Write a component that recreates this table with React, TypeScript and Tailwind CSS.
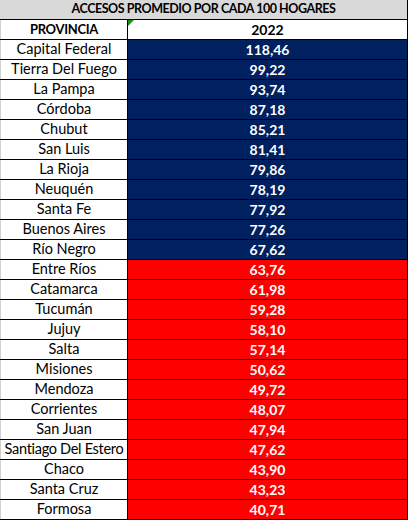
import React from "react";

const rows: [string, string, boolean][] = [
  ["Capital Federal", "118,46", true],
  ["Tierra Del Fuego", "99,22", true],
  ["La Pampa", "93,74", true],
  ["Córdoba", "87,18", true],
  ["Chubut", "85,21", true],
  ["San Luis", "81,41", true],
  ["La Rioja", "79,86", true],
  ["Neuquén", "78,19", true],
  ["Santa Fe", "77,92", true],
  ["Buenos Aires", "77,26", true],
  ["Río Negro", "67,62", true],
  ["Entre Ríos", "63,76", false],
  ["Catamarca", "61,98", false],
  ["Tucumán", "59,28", false],
  ["Jujuy", "58,10", false],
  ["Salta", "57,14", false],
  ["Misiones", "50,62", false],
  ["Mendoza", "49,72", false],
  ["Corrientes", "48,07", false],
  ["San Juan", "47,94", false],
  ["Santiago Del Estero", "47,62", false],
  ["Chaco", "43,90", false],
  ["Santa Cruz", "43,23", false],
  ["Formosa", "40,71", false],
];

export default function App() {
  return (
    <div className="w-[409px] h-[521px] bg-white" style={{ fontFamily: "Lato, 'Open Sans', sans-serif" }}>
      <div className="w-[408px] border-r border-black">
        <div className="h-[20px] bg-[#d9d9d9] border-b border-black flex items-center justify-center text-[12.5px] tracking-[-0.45px] font-bold text-black leading-none whitespace-nowrap">
          ACCESOS PROMEDIO POR CADA 100 HOGARES
        </div>
        <div className="flex h-[20px] border-b border-black">
          <div className="w-[128px] border-l border-[#d0d0d0] border-r border-r-black flex items-center justify-center text-[13px] tracking-[-0.3px] font-bold text-black leading-none">
            PROVINCIA
          </div>
          <div className="relative flex-1 flex items-center justify-center text-[14px] font-bold text-black leading-none">
            <div className="absolute left-0 top-0 w-0 h-0 border-t-[6px] border-t-[#1e8c1e] border-r-[6px] border-r-transparent" />
            2022
          </div>
        </div>
        {rows.map(([name, val, blue]) => (
          <div key={name} className="flex h-[20px] border-b border-black">
            <div className="w-[128px] border-l border-[#d0d0d0] border-r border-r-black flex items-center justify-center text-[14.5px] text-black leading-none bg-white whitespace-nowrap">
              <span className={name.length > 16 ? "tracking-[-0.3px]" : ""}>{name}</span>
            </div>
            <div
              className={
                "flex-1 flex items-center justify-center text-[14px] font-bold text-white leading-none " +
                (blue ? "bg-[#002060]" : "bg-[#ff0000]")
              }
            >
              {val}
            </div>
          </div>
        ))}
      </div>
    </div>
  );
}
